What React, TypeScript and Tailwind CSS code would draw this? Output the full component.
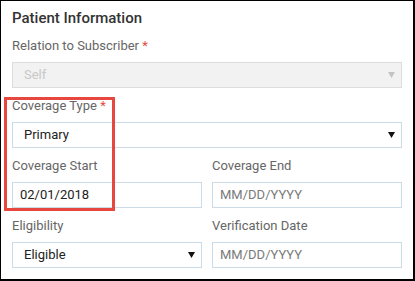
import React from "react";

function Arrow({ color }: { color: string }) {
  return (
    <svg width="7" height="6" viewBox="0 0 7 6" className="shrink-0">
      <polygon points="0,0 7,0 3.5,6" fill={color} />
    </svg>
  );
}

function Label({ text, req }: { text: string; req?: boolean }) {
  return (
    <div className="h-[20px] leading-[20px] mb-[6px] text-[13px] text-[#666666]">
      {text}
      {req && <span className="text-[#e5493f]"> *</span>}
    </div>
  );
}

function Select({ value, disabled }: { value: string; disabled?: boolean }) {
  return (
    <div
      className={
        disabled
          ? "h-[26px] border border-[#dddddd] bg-[#f2f2f2] flex items-center justify-between pl-[11px] pr-[6px] text-[13px] text-[#c8c8c8]"
          : "h-[26px] border border-[#cbdbe7] bg-white flex items-center justify-between pl-[11px] pr-[6px] text-[13px] text-[#222222]"
      }
    >
      <span>{value}</span>
      <Arrow color={disabled ? "#c4c4c4" : "#111111"} />
    </div>
  );
}

function Input({ value, placeholder }: { value?: string; placeholder?: string }) {
  return (
    <div className="h-[26px] border border-[#cbdbe7] bg-white flex items-center pl-[7px] text-[13px]">
      {value ? (
        <span className="text-[#222222]">{value}</span>
      ) : (
        <span className="text-[#7a7a7a]">{placeholder}</span>
      )}
    </div>
  );
}

export default function App() {
  return (
    <div className="relative w-[415px] h-[281px] bg-white border-l border-t border-r-2 border-b-2 border-black px-[11px] pt-[7px] font-['Roboto',sans-serif]">
      <div className="h-[20px] leading-[20px] text-[15px] font-medium text-[#333333]">
        Patient Information
      </div>
      <div className="mt-[8px]">
        <Label text="Relation to Subscriber" req />
        <Select value="Self" disabled />
      </div>
      <div className="mt-[8px]">
        <Label text="Coverage Type" req />
        <Select value="Primary" />
      </div>
      <div className="mt-[8px] grid grid-cols-2 gap-x-[10px]">
        <div>
          <Label text="Coverage Start" />
          <Input value="02/01/2018" />
        </div>
        <div>
          <Label text="Coverage End" />
          <Input placeholder="MM/DD/YYYY" />
        </div>
      </div>
      <div className="mt-[8px] grid grid-cols-2 gap-x-[10px]">
        <div>
          <Label text="Eligibility" />
          <Select value="Eligible" />
        </div>
        <div>
          <Label text="Verification Date" />
          <Input placeholder="MM/DD/YYYY" />
        </div>
      </div>
      <div className="absolute left-[3px] top-[96px] w-[111px] h-[114px] border-[3px] border-[#e8473f] pointer-events-none" />
    </div>
  );
}
